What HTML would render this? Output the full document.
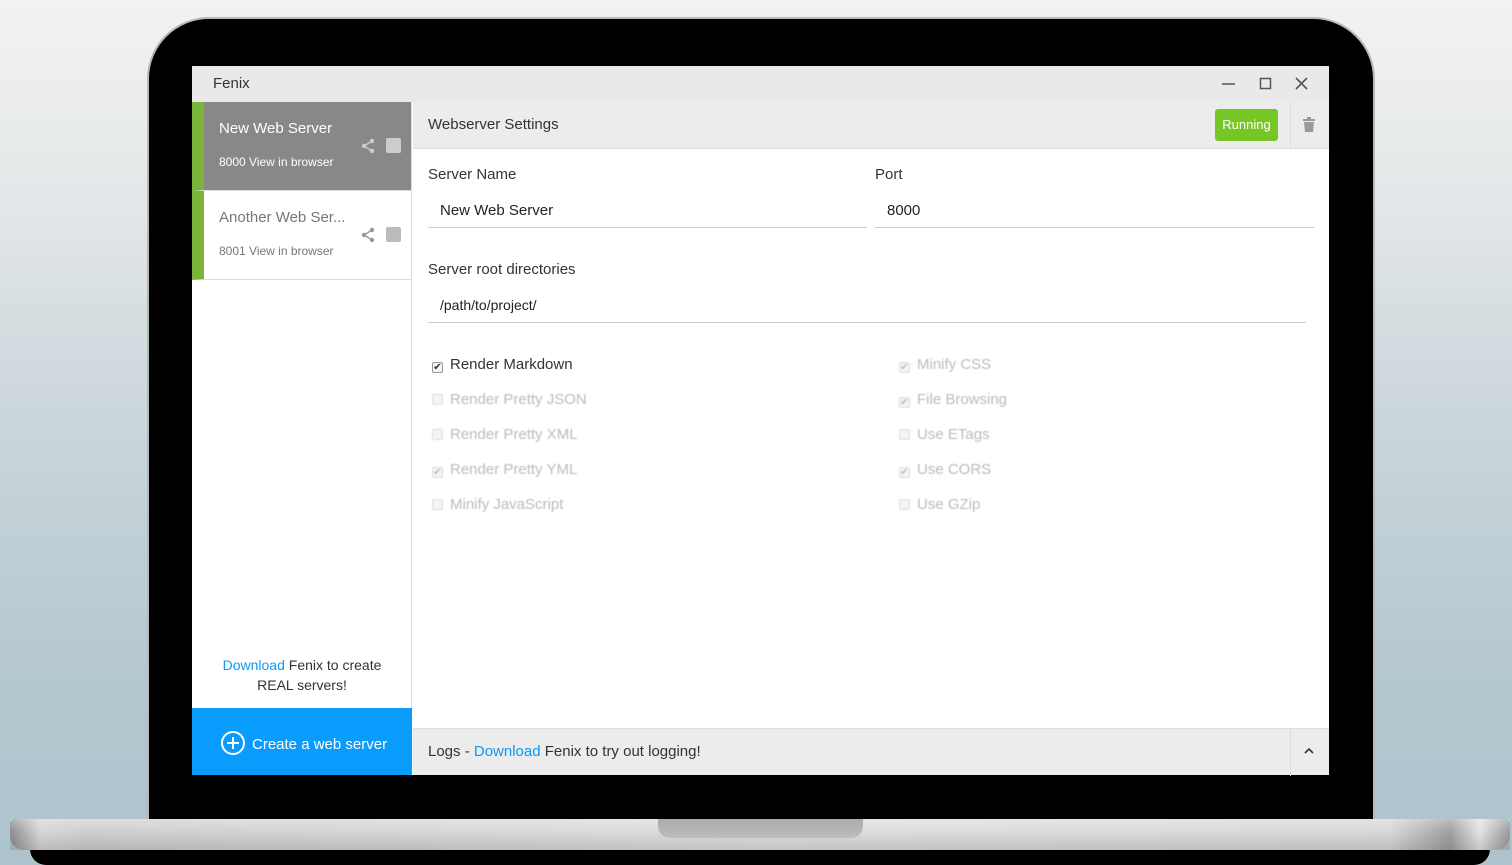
<!DOCTYPE html>
<html><head><style>
*{margin:0;padding:0;box-sizing:border-box}
body{width:1512px;height:865px;overflow:hidden;position:relative;font-family:"Liberation Sans",sans-serif;background:linear-gradient(180deg,#f2f2f2 0%,#e6e9ea 20%,#c9d5da 50%,#b3c7cf 80%,#aec3cc 100%)}
.bezel{position:absolute;left:147px;top:17px;width:1228px;height:820px;background:#000;border-radius:62px 62px 0 0;border:2px solid #b8b8b8;border-bottom:none}
.base{position:absolute;left:10px;top:819px;width:1500px;height:31px;border-radius:4px 4px 14px 14px;background:linear-gradient(90deg,#8e8e8e 0%,#d6d6d6 2%,#cfcfcf 5%,#dedede 50%,#d8d8d8 92%,#a0a0a0 96%,#e4e4e4 98%,#9a9a9a 100%)}
.base:after{content:"";position:absolute;left:0;right:0;top:0;height:31px;background:linear-gradient(180deg,rgba(255,255,255,.3),rgba(0,0,0,0) 40%,rgba(0,0,0,.12))}
.notch{position:absolute;left:658px;top:819px;width:205px;height:19px;background:linear-gradient(180deg,#aaa,#bdbdbd);border-radius:0 0 12px 12px;z-index:2}
.under{position:absolute;left:30px;top:849px;width:1460px;height:16px;background:#000;border-radius:0 0 40px 40px}
.screen{position:absolute;left:192px;top:66px;width:1137px;height:709px;background:#fff;font-family:"Liberation Sans",sans-serif}
.title{height:36px;background:#e9e9e9;font-size:15px;color:#333;padding:9px 0 0 21px;position:relative}
.side{position:absolute;left:0;top:36px;width:220px;bottom:0;border-right:1px solid #ddd}
.item{height:89px;border-left:12px solid #7ab43a;position:relative;padding:18px 0 0 15px;border-bottom:1px solid #ddd}
.item .n{font-size:15px}
.item .s{font-size:12px;margin-top:18px}
.sq{position:absolute;left:182px;top:36px;width:15px;height:15px;background:#bbb;border-radius:2px}
.main{position:absolute;left:221px;top:36px;right:0;bottom:0}
.hdr{height:47px;background:#ececec;border-bottom:1px solid #ddd;font-size:15px;color:#333;padding:14px 0 0 15px;position:relative}
.run{position:absolute;left:802px;top:7px;width:63px;height:32px;background:#76c626;border-radius:3px;color:#fff;font-size:13px;text-align:center;line-height:32px}
.lbl{position:absolute;font-size:15px;color:#333}
.inp{position:absolute;font-size:15px;color:#222;border-bottom:1px solid #ccc;padding-left:12px;height:32px}
.cb{position:absolute;font-size:15px;color:#333}
.cb i{display:inline-block;width:11px;height:11px;border:1px solid #999;border-radius:2px;margin-right:7px;vertical-align:-1px;font-style:normal;font-size:10px;line-height:10px;text-align:center;background:#f4f4f4}
.dim{color:#bbb;filter:blur(.6px)}
.dim i{border-color:#ddd}
.logs{position:absolute;left:0;right:0;bottom:0;height:47px;background:#ececec;border-top:1px solid #ddd;font-size:15px;color:#333;padding:14px 0 0 15px}
a{color:#0a9af5;text-decoration:none}
</style></head><body>
<div class="bezel"></div>
<div class="under"></div>
<div class="base"></div>
<div class="notch"></div>
<div class="screen">
 <div class="title">Fenix
  <svg style="position:absolute;left:1030px;top:10px" width="100" height="16"><line x1="0" y1="8" x2="13" y2="8" stroke="#555" stroke-width="1.5"/><rect x="38.5" y="2.5" width="10" height="10" fill="none" stroke="#555" stroke-width="1.5"/><path d="M74 2L85 13M85 2L74 13" stroke="#555" stroke-width="1.6"/></svg>
 </div>
 <div class="side">
  <div class="item" style="background:#888;color:#fff"><div class="n">New Web Server</div><div class="s">8000 View in browser</div>
   <svg style="position:absolute;left:157px;top:36px" width="14" height="16"><circle cx="11" cy="3" r="2.2" fill="#ccc"/><circle cx="3" cy="8" r="2.2" fill="#ccc"/><circle cx="11" cy="13" r="2.2" fill="#ccc"/><path d="M11 3L3 8L11 13" stroke="#ccc" stroke-width="1.4" fill="none"/></svg><div class="sq" style="background:#ccc"></div></div>
  <div class="item" style="color:#777"><div class="n">Another Web Ser...</div><div class="s">8001 View in browser</div>
   <svg style="position:absolute;left:157px;top:36px" width="14" height="16"><circle cx="11" cy="3" r="2.2" fill="#999"/><circle cx="3" cy="8" r="2.2" fill="#999"/><circle cx="11" cy="13" r="2.2" fill="#999"/><path d="M11 3L3 8L11 13" stroke="#999" stroke-width="1.4" fill="none"/></svg><div class="sq"></div></div>
  <div style="position:absolute;top:553px;width:220px;text-align:center;font-size:14px;color:#333;line-height:20px"><a>Download</a> Fenix to create<br>REAL servers!</div>
  <div style="position:absolute;bottom:0;left:0;width:220px;height:67px;background:#0a9cfc;color:#fff;font-size:15px;padding:22px 0 0 28px">
   <svg width="26" height="26" style="vertical-align:-7px;margin-right:6px"><circle cx="13" cy="13" r="11" fill="none" stroke="#fff" stroke-width="2"/><path d="M13 7V19M7 13H19" stroke="#fff" stroke-width="2"/></svg>Create a web server</div>
 </div>
 <div class="main">
  <div class="hdr">Webserver Settings<div class="run">Running</div>
   <div style="position:absolute;left:877px;top:0;width:1px;height:47px;background:#ddd"></div>
   <svg style="position:absolute;left:889px;top:15px" width="14" height="16"><rect x="1" y="2" width="12" height="2" fill="#999"/><rect x="5" y="0" width="4" height="2" fill="#999"/><path d="M2 5H12L11 15H3Z" fill="#999"/></svg>
  </div>
  <div class="lbl" style="left:15px;top:64px">Server Name</div>
  <div class="lbl" style="left:462px;top:64px">Port</div>
  <div class="inp" style="left:15px;top:94px;width:439px;padding-top:6px">New Web Server</div>
  <div class="inp" style="left:462px;top:94px;width:439px;padding-top:6px">8000</div>
  <div class="lbl" style="left:15px;top:159px">Server root directories</div>
  <div class="inp" style="left:15px;top:189px;width:878px;padding-top:6px;font-size:14px">/path/to/project/</div>
  <div class="cb" style="left:19px;top:254px"><i>✔</i>Render Markdown</div>
  <div class="cb dim" style="left:19px;top:289px"><i></i>Render Pretty JSON</div>
  <div class="cb dim" style="left:19px;top:324px"><i></i>Render Pretty XML</div>
  <div class="cb dim" style="left:19px;top:359px"><i>✔</i>Render Pretty YML</div>
  <div class="cb dim" style="left:19px;top:394px"><i></i>Minify JavaScript</div>
  <div class="cb dim" style="left:486px;top:254px"><i>✔</i>Minify CSS</div>
  <div class="cb dim" style="left:486px;top:289px"><i>✔</i>File Browsing</div>
  <div class="cb dim" style="left:486px;top:324px"><i></i>Use ETags</div>
  <div class="cb dim" style="left:486px;top:359px"><i>✔</i>Use CORS</div>
  <div class="cb dim" style="left:486px;top:394px"><i></i>Use GZip</div>
  <div class="logs">Logs - <a>Download</a> Fenix to try out logging!
   <div style="position:absolute;left:877px;top:0;width:1px;height:47px;background:#ddd"></div>
   <svg style="position:absolute;left:891px;top:18px" width="10" height="8"><path d="M1 6L5 2L9 6" stroke="#333" stroke-width="1.6" fill="none"/></svg>
  </div>
 </div>
</div>
</body></html>
